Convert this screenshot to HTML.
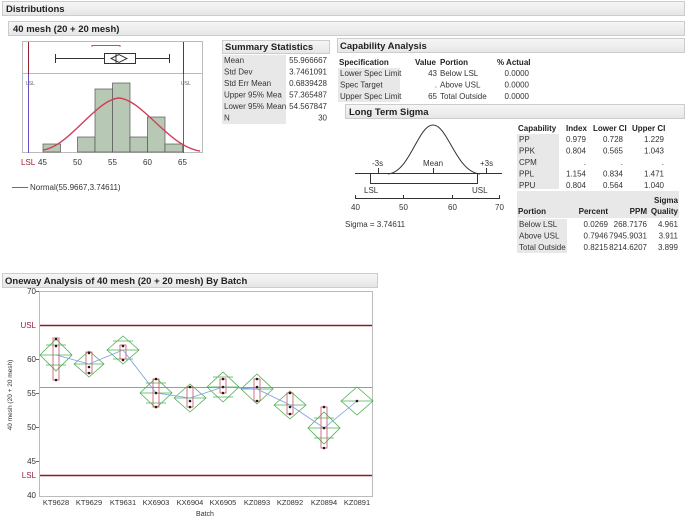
<!DOCTYPE html>
<html><head><style>
body{margin:0;background:#fff;}
svg{display:block;font-family:"Liberation Sans",Arial,sans-serif;}
.t{font-size:8px;fill:#333;}
.h{font-size:9.5px;font-weight:bold;fill:#222;}
.b{font-size:8px;font-weight:bold;fill:#222;}
</style></head><body>
<svg width="685" height="518" viewBox="0 0 685 518" xmlns="http://www.w3.org/2000/svg">
<defs><linearGradient id="g" x1="0" y1="0" x2="0" y2="1"><stop offset="0" stop-color="#f6f6f6"/><stop offset="1" stop-color="#e6e6e6"/></linearGradient></defs>
<rect x="2.5" y="1.5" width="682" height="14" fill="url(#g)" stroke="#ccc"/>
<text x="6" y="12" class="h">Distributions</text>
<rect x="8.5" y="21.5" width="676" height="14" fill="url(#g)" stroke="#ccc"/>
<text x="13" y="32" class="h">40 mesh (20 + 20 mesh)</text>

<rect x="22.5" y="41.5" width="180" height="111" fill="#fff" stroke="#bbb"/>
<line x1="22" y1="73.5" x2="203" y2="73.5" stroke="#bbb"/>
<line x1="92" y1="45.5" x2="120" y2="45.5" stroke="#c0506a"/>
<line x1="92" y1="45" x2="92" y2="47" stroke="#c0506a"/><line x1="120" y1="45" x2="120" y2="47" stroke="#c0506a"/>
<line x1="55" y1="58.5" x2="170" y2="58.5" stroke="#333"/>
<line x1="55.5" y1="54" x2="55.5" y2="63" stroke="#333"/><line x1="169.5" y1="54" x2="169.5" y2="63" stroke="#333"/>
<rect x="104.5" y="53.5" width="31" height="10" fill="#fff" stroke="#333"/>
<polygon points="111,58.5 119,54.5 127,58.5 119,62.5" fill="none" stroke="#333"/>
<line x1="116" y1="54" x2="116" y2="63" stroke="#333"/>
<g fill="#b7c9b4" stroke="#555" stroke-width="0.7">
<rect x="43" y="144" width="17.5" height="8"/>
<rect x="77.5" y="137" width="17.5" height="15"/>
<rect x="95" y="89" width="17.5" height="63"/>
<rect x="112.5" y="83" width="17.5" height="69"/>
<rect x="130" y="137" width="17.5" height="15"/>
<rect x="147.5" y="117" width="17.5" height="35"/>
<rect x="165" y="144" width="17.5" height="8"/>
</g>
<path d="M43,150 C70,146 95,100 119,98 C143,100 168,146 200,151" fill="none" stroke="#d0405a" stroke-width="1.4"/>
<line x1="28.5" y1="42" x2="28.5" y2="74" stroke="#8a2030"/>
<line x1="28.5" y1="74" x2="28.5" y2="153" stroke="#6a50c0"/>
<line x1="183.5" y1="42" x2="183.5" y2="74" stroke="#8a2030"/>
<line x1="183.5" y1="74" x2="183.5" y2="153" stroke="#6a50c0"/>
<text x="26" y="85" style="font-size:5px;fill:#666">LSL</text>
<text x="181" y="85" style="font-size:5px;fill:#666">USL</text>
<text x="21" y="165" class="t" style="fill:#a02030">LSL</text>
<text x="38" y="165" class="t">45</text><text x="73" y="165" class="t">50</text><text x="108" y="165" class="t">55</text><text x="143" y="165" class="t">60</text><text x="178" y="165" class="t">65</text>
<line x1="12" y1="187.5" x2="28" y2="187.5" stroke="#d0405a"/>
<text x="30" y="190" class="t">Normal(55.9667,3.74611)</text>

<rect x="222.5" y="40.5" width="107" height="13" fill="url(#g)" stroke="#ccc"/>
<text x="225" y="50" class="h">Summary Statistics</text>
<rect x="222" y="55" width="64" height="69" fill="#e8e8e8"/>
<g class="t">
<text x="224" y="63">Mean</text><text x="224" y="74.5">Std Dev</text><text x="224" y="86">Std Err Mean</text><text x="224" y="97.5">Upper 95% Mea</text><text x="224" y="109">Lower 95% Mean</text><text x="224" y="120.5">N</text>
</g>
<g class="t" text-anchor="end">
<text x="327" y="63">55.966667</text><text x="327" y="74.5">3.7461091</text><text x="327" y="86">0.6839428</text><text x="327" y="97.5">57.365487</text><text x="327" y="109">54.567847</text><text x="327" y="120.5">30</text>
</g>

<rect x="337.5" y="38.5" width="347" height="14" fill="url(#g)" stroke="#ccc"/>
<text x="340" y="49" class="h">Capability Analysis</text>
<g class="b"><text x="339" y="65">Specification</text><text x="415" y="65">Value</text><text x="440" y="65">Portion</text><text x="497" y="65">% Actual</text></g>
<rect x="338" y="68" width="62" height="34" fill="#e8e8e8"/>
<g class="t">
<text x="340" y="76">Lower Spec Limit</text><text x="340" y="87.5">Spec Target</text><text x="340" y="99">Upper Spec Limit</text>
<text x="440" y="76">Below LSL</text><text x="440" y="87.5">Above USL</text><text x="440" y="99">Total Outside</text>
</g>
<g class="t" text-anchor="end">
<text x="437" y="76">43</text><text x="437" y="87.5">.</text><text x="437" y="99">65</text>
<text x="529" y="76">0.0000</text><text x="529" y="87.5">0.0000</text><text x="529" y="99">0.0000</text>
</g>
<rect x="345.5" y="104.5" width="339" height="14" fill="url(#g)" stroke="#ccc"/>
<text x="349" y="115" class="h">Long Term Sigma</text>

<path d="M388,174 C410,172 418,125 433,125 C448,125 456,172 480,174" fill="none" stroke="#333"/>
<line x1="355" y1="173.5" x2="502" y2="173.5" stroke="#333"/>
<line x1="370.5" y1="173" x2="370.5" y2="183" stroke="#333"/>
<line x1="477.5" y1="173" x2="477.5" y2="183" stroke="#333"/>
<line x1="370" y1="183.5" x2="478" y2="183.5" stroke="#333"/>
<line x1="378.5" y1="168" x2="378.5" y2="174" stroke="#333"/><line x1="433.5" y1="168" x2="433.5" y2="174" stroke="#333"/><line x1="486.5" y1="168" x2="486.5" y2="174" stroke="#333"/>
<g class="t"><text x="372" y="166">-3s</text><text x="423" y="166">Mean</text><text x="480" y="166">+3s</text>
<text x="364" y="193">LSL</text><text x="472" y="193">USL</text></g>
<line x1="355" y1="198.5" x2="500" y2="198.5" stroke="#333"/>
<g stroke="#333"><line x1="355.5" y1="195" x2="355.5" y2="199"/><line x1="403.5" y1="195" x2="403.5" y2="199"/><line x1="452.5" y1="195" x2="452.5" y2="199"/><line x1="499.5" y1="195" x2="499.5" y2="199"/></g>
<g class="t"><text x="351" y="210">40</text><text x="399" y="210">50</text><text x="448" y="210">60</text><text x="495" y="210">70</text>
<text x="345" y="227">Sigma = 3.74611</text></g>

<g class="b"><text x="518" y="131">Capability</text><text x="566" y="131">Index</text><text x="593" y="131">Lower CI</text><text x="632" y="131">Upper CI</text></g>
<rect x="517" y="134" width="42" height="55" fill="#e8e8e8"/>
<g class="t"><text x="519" y="142">PP</text><text x="519" y="153.5">PPK</text><text x="519" y="165">CPM</text><text x="519" y="176.5">PPL</text><text x="519" y="188">PPU</text></g>
<g class="t" text-anchor="end">
<text x="586" y="142">0.979</text><text x="586" y="153.5">0.804</text><text x="586" y="165">.</text><text x="586" y="176.5">1.154</text><text x="586" y="188">0.804</text>
<text x="623" y="142">0.728</text><text x="623" y="153.5">0.565</text><text x="623" y="165">.</text><text x="623" y="176.5">0.834</text><text x="623" y="188">0.564</text>
<text x="664" y="142">1.229</text><text x="664" y="153.5">1.043</text><text x="664" y="165">.</text><text x="664" y="176.5">1.471</text><text x="664" y="188">1.040</text>
</g>
<rect x="517" y="191" width="162" height="27" fill="#e8e8e8"/>
<g class="b"><text x="518" y="214">Portion</text><text text-anchor="end" x="608" y="214">Percent</text><text text-anchor="end" x="647" y="214">PPM</text><text text-anchor="end" x="678" y="214">Quality</text><text text-anchor="end" x="678" y="203">Sigma</text></g>
<rect x="517" y="219" width="50" height="34" fill="#e8e8e8"/>
<g class="t"><text x="519" y="227">Below LSL</text><text x="519" y="238.5">Above USL</text><text x="519" y="250">Total Outside</text></g>
<g class="t" text-anchor="end">
<text x="608" y="227">0.0269</text><text x="608" y="238.5">0.7946</text><text x="608" y="250">0.8215</text>
<text x="647" y="227">268.7176</text><text x="647" y="238.5">7945.9031</text><text x="647" y="250">8214.6207</text>
<text x="678" y="227">4.961</text><text x="678" y="238.5">3.911</text><text x="678" y="250">3.899</text>
</g>

<rect x="2.5" y="273.5" width="375" height="14" fill="url(#g)" stroke="#ccc"/>
<text x="5" y="284" class="h">Oneway Analysis of 40 mesh (20 + 20 mesh) By Batch</text>
<rect x="39.5" y="291.5" width="333" height="205" fill="#fff" stroke="#bbb"/>
<line x1="40" y1="387.5" x2="372" y2="387.5" stroke="#999"/>
<line x1="40" y1="325.5" x2="372" y2="325.5" stroke="#8a1a2a" stroke-width="1.5"/>
<line x1="40" y1="475.5" x2="372" y2="475.5" stroke="#8a1a2a" stroke-width="1.5"/>
<g class="t" text-anchor="end"><text x="36" y="294">70</text><text x="36" y="362">60</text><text x="36" y="396">55</text><text x="36" y="430">50</text><text x="36" y="464">45</text><text x="36" y="498">40</text>
<text x="36" y="328" style="fill:#a02040">USL</text><text x="36" y="478" style="fill:#a02040">LSL</text></g>
<g stroke="#666"><line x1="36" y1="291.5" x2="39" y2="291.5"/><line x1="36" y1="359.5" x2="39" y2="359.5"/><line x1="36" y1="393.5" x2="39" y2="393.5"/><line x1="36" y1="427.5" x2="39" y2="427.5"/><line x1="36" y1="461.5" x2="39" y2="461.5"/></g>
<text transform="translate(12,395) rotate(-90)" text-anchor="middle" style="font-size:6.5px;fill:#333">40 mesh (20 + 20 mesh)</text>
<g class="t" text-anchor="middle" style="font-size:7.5px"><text x="56" y="505">KT9628</text><text x="89" y="505">KT9629</text><text x="123" y="505">KT9631</text><text x="156" y="505">KX6903</text><text x="190" y="505">KX6904</text><text x="223" y="505">KX6905</text><text x="257" y="505">KZ0893</text><text x="290" y="505">KZ0892</text><text x="324" y="505">KZ0894</text><text x="357" y="505">KZ0891</text>
<text x="205" y="516" style="font-size:7px">Batch</text></g>
<g fill="none" stroke="#4caf50" stroke-width="0.8">
<polygon points="40,355 56,339 72,355 56,371"/><line x1="40" y1="355" x2="72" y2="355"/><line x1="46" y1="345" x2="66" y2="345"/><line x1="46" y1="365" x2="66" y2="365"/>
<polygon points="74,364 89,351 104,364 89,377"/><line x1="74" y1="364" x2="104" y2="364"/>
<polygon points="107,350 123,336 139,350 123,364"/><line x1="107" y1="350" x2="139" y2="350"/><line x1="113" y1="341" x2="133" y2="341"/><line x1="113" y1="359" x2="133" y2="359"/>
<polygon points="140,393 156,378 172,393 156,408"/><line x1="140" y1="393" x2="172" y2="393"/><line x1="146" y1="383" x2="166" y2="383"/><line x1="146" y1="403" x2="166" y2="403"/>
<polygon points="174,398 190,384 206,398 190,412"/><line x1="174" y1="398" x2="206" y2="398"/>
<polygon points="207,387 223,372 239,387 223,402"/><line x1="207" y1="387" x2="239" y2="387"/><line x1="213" y1="377" x2="233" y2="377"/><line x1="213" y1="397" x2="233" y2="397"/>
<polygon points="241,389 257,374 273,389 257,404"/><line x1="241" y1="389" x2="273" y2="389"/>
<polygon points="274,405 290,391 306,405 290,419"/><line x1="274" y1="405" x2="306" y2="405"/>
<polygon points="308,428 324,412 340,428 324,444"/><line x1="308" y1="428" x2="340" y2="428"/><line x1="314" y1="418" x2="334" y2="418"/><line x1="314" y1="438" x2="334" y2="438"/>
<polygon points="341,401 357,387 373,401 357,415"/><line x1="341" y1="401" x2="373" y2="401"/>
</g>
<g fill="none" stroke="#c8506a" stroke-width="0.8">
<rect x="53" y="338" width="6" height="42"/><rect x="86" y="352" width="6" height="21"/><rect x="120" y="345" width="6" height="14"/>
<rect x="153" y="379" width="6" height="28"/><rect x="187" y="387" width="6" height="20"/><rect x="220" y="379" width="6" height="14"/>
<rect x="254" y="379" width="6" height="22"/><rect x="287" y="393" width="6" height="21"/><rect x="321" y="407" width="6" height="41"/>
</g>
<polyline points="56,355 89,364 123,350 156,393 190,398 223,387 257,389 290,405 324,428 357,401" fill="none" stroke="#7b9be0" stroke-width="0.8"/>
<g fill="#3a1010">
<circle cx="56" cy="339" r="1.3"/><circle cx="56" cy="346" r="1.3"/><circle cx="56" cy="380" r="1.3"/>
<circle cx="89" cy="353" r="1.3"/><circle cx="89" cy="367" r="1.3"/><circle cx="89" cy="373" r="1.3"/>
<circle cx="123" cy="346" r="1.3"/><circle cx="123" cy="360" r="1.3"/>
<circle cx="156" cy="379" r="1.3"/><circle cx="156" cy="393" r="1.3"/><circle cx="156" cy="407" r="1.3"/>
<circle cx="190" cy="387" r="1.3"/><circle cx="190" cy="401" r="1.3"/><circle cx="190" cy="407" r="1.3"/>
<circle cx="223" cy="379" r="1.3"/><circle cx="223" cy="387" r="1.3"/><circle cx="223" cy="393" r="1.3"/>
<circle cx="257" cy="379" r="1.3"/><circle cx="257" cy="387" r="1.3"/><circle cx="257" cy="401" r="1.3"/>
<circle cx="290" cy="393" r="1.3"/><circle cx="290" cy="407" r="1.3"/><circle cx="290" cy="414" r="1.3"/>
<circle cx="324" cy="407" r="1.3"/><circle cx="324" cy="428" r="1.3"/><circle cx="324" cy="448" r="1.3"/>
<circle cx="357" cy="401" r="1.3"/>
</g>
</svg>
</body></html>
